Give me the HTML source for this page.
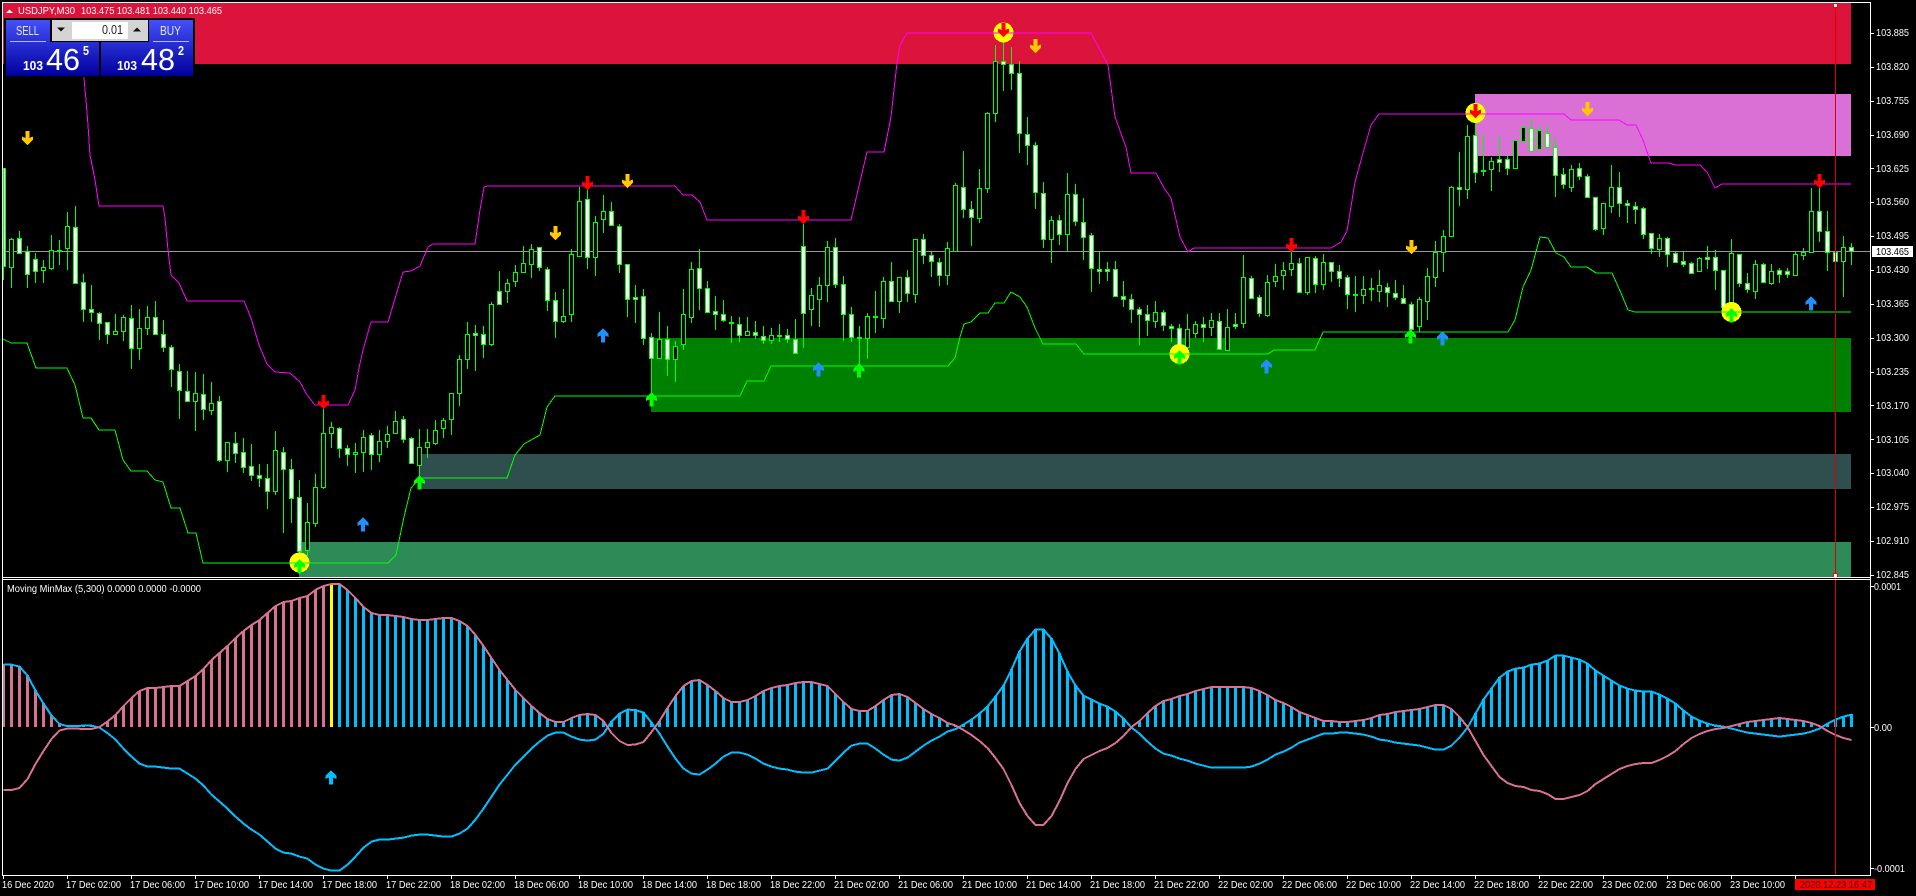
<!DOCTYPE html>
<html><head><meta charset="utf-8"><title>USDJPY,M30</title>
<style>
html,body{margin:0;padding:0;background:#000;width:1916px;height:896px;overflow:hidden}
svg{display:block;position:absolute;left:0;top:0}
text{font-family:"Liberation Sans",sans-serif;font-size:10.5px;fill:#fff}
.c{shape-rendering:crispEdges}
</style></head><body>
<svg width="1916" height="896" viewBox="0 0 1916 896" xmlns="http://www.w3.org/2000/svg">
<defs>
<linearGradient id="pg" gradientUnits="userSpaceOnUse" x1="0" y1="20" x2="0" y2="76"><stop offset="0" stop-color="#4450fa"/><stop offset="1" stop-color="#00009c"/></linearGradient>
<path id="dn" d="M-2 0H2V7L5.5 5.5V8.5L0 14.5L-5.5 8.5V5.5L-2 7Z"/>
<path id="up" d="M-2 14.5H2V7.5L5.5 9V6L0 0L-5.5 6V9L-2 7.5Z"/>
</defs>
<rect width="1916" height="896" fill="#000"/>
<g class="c">
<rect x="3" y="3" width="1848" height="61" fill="#DC143C"/>
<rect x="1475" y="94" width="376" height="62" fill="#DA70D6"/>
<rect x="651" y="338" width="1200" height="74" fill="#008000"/>
<rect x="419" y="454" width="1432" height="35" fill="#2F4F4F"/>
<rect x="299" y="542" width="1552" height="35" fill="#2E8B57"/>
<rect x="3" y="251" width="1867" height="1" fill="#999"/>
<path fill="none" stroke="#00ff00" d="M3.5 168V280M11.5 238V288M19.5 231V254M27.5 246V288M35.5 253V283M43.5 260V283M51.5 235V270M59.5 240V265M67.5 212V270M75.5 206V284M83.5 274V322M91.5 285V322M99.5 312V340M107.5 322V344M115.5 314V335M123.5 315V341M131.5 305V369M139.5 309V360M147.5 306V335M155.5 301V335M163.5 320V352M171.5 345V387M179.5 364V419M187.5 371V402M195.5 372V431M203.5 374V420M211.5 382V415M219.5 396V462M227.5 442V472M235.5 432V463M243.5 438V473M251.5 444V481M259.5 464V487M267.5 464V509M275.5 431V495M283.5 447V533M291.5 459V523M299.5 480V560M307.5 503V556M315.5 474V527M323.5 408V489M331.5 422V448M339.5 427V458M347.5 445V466M355.5 443V473M363.5 430V472M371.5 433V470M379.5 430V462M387.5 426V448M395.5 411V434M403.5 416V443M411.5 437V463M419.5 429V477M427.5 429V458M435.5 420V445M443.5 418V438M451.5 393V435M459.5 355V406M467.5 322V369M475.5 325V371M483.5 326V358M491.5 302V346M499.5 271V305M507.5 279V303M515.5 265V287M523.5 246V273M531.5 244V278M539.5 247V271M547.5 267V311M555.5 292V338M563.5 289V323M571.5 249V322M579.5 187V256M587.5 190V269M595.5 216V276M603.5 195V233M611.5 202V226M619.5 224V273M627.5 264V317M635.5 285V323M643.5 289V345M651.5 333V395M659.5 312V359M667.5 326V376M675.5 341V382M683.5 289V350M691.5 262V323M699.5 249V310M707.5 281V313M715.5 296V330M723.5 300V322M731.5 316V343M739.5 317V342M747.5 317V336M755.5 321V339M763.5 326V344M771.5 328V344M779.5 324V342M787.5 329V343M795.5 319V354M803.5 223V348M811.5 288V326M819.5 277V327M827.5 241V302M835.5 238V288M843.5 276V341M851.5 307V342M859.5 326V370M867.5 313V359M875.5 291V333M883.5 277V328M891.5 262V302M899.5 277V313M907.5 270V302M915.5 239V303M923.5 234V264M931.5 251V277M939.5 258V286M947.5 242V285M955.5 183V251M963.5 151V218M971.5 201V246M979.5 169V223M987.5 112V193M995.5 45V122M1003.5 42V91M1011.5 47V90M1019.5 61V153M1027.5 117V165M1035.5 142V209M1043.5 182V248M1051.5 216V263M1059.5 215V245M1067.5 173V252M1075.5 184V226M1083.5 198V260M1091.5 233V292M1099.5 252V284M1107.5 262V281M1115.5 261V297M1123.5 281V307M1131.5 294V323M1139.5 307V345M1147.5 305V336M1155.5 301V328M1163.5 310V331M1171.5 324V342M1179.5 324V347M1187.5 314V355M1195.5 321V338M1203.5 317V342M1211.5 313V336M1219.5 313V350M1227.5 309V351M1235.5 313V329M1243.5 255V328M1251.5 276V299M1259.5 295V317M1267.5 275V317M1275.5 264V287M1283.5 262V290M1291.5 252V276M1299.5 258V293M1307.5 257V295M1315.5 256V293M1323.5 254V290M1331.5 262V282M1339.5 265V287M1347.5 275V309M1355.5 276V312M1363.5 276V304M1371.5 278V301M1379.5 270V302M1387.5 283V307M1395.5 280V300M1403.5 285V304M1411.5 302V335M1419.5 297V332M1427.5 268V320M1435.5 241V287M1443.5 230V272M1451.5 186V237M1459.5 152V206M1467.5 125V199M1475.5 123V183M1483.5 134V176M1491.5 157V191M1499.5 136V172M1507.5 155V175M1515.5 140V169M1523.5 126V142M1531.5 120V152M1539.5 126V150M1547.5 126V148M1555.5 138V197M1563.5 168V189M1571.5 165V192M1579.5 163V180M1587.5 174V198M1595.5 197V231M1603.5 203V235M1611.5 165V213M1619.5 172V217M1627.5 200V223M1635.5 202V224M1643.5 207V239M1651.5 233V254M1659.5 234V257M1667.5 237V267M1675.5 252V263M1683.5 252V267M1691.5 262V274M1699.5 257V272M1707.5 246V269M1715.5 250V290M1723.5 270V309M1731.5 239V305M1739.5 254V287M1747.5 273V293M1755.5 260V299M1763.5 263V283M1771.5 264V285M1779.5 268V283M1787.5 268V278M1795.5 252V275M1803.5 248V260M1811.5 188V252M1819.5 187V242M1827.5 211V271M1835.5 250V262M1843.5 236V297M1851.5 243V265"/>
<path fill="#fff" stroke="#00ff00" d="M3.5 168.5h2V266.5h-2zM17.5 238.500h4V253.500h-4zM25.500 251.500h4V274.500h-4zM33.500 259.500h4V271.500h-4zM57.500 250.500h4V251.500h-4zM73.500 227.500h4V283.500h-4zM81.500 282.500h4V309.500h-4zM89.500 309.500h4V312.500h-4zM97.500 313.500h4V323.500h-4zM105.500 322.500h4V334.500h-4zM129.500 318.500h4V348.500h-4zM153.500 317.500h4V334.500h-4zM161.500 334.500h4V347.500h-4zM169.500 347.500h4V369.500h-4zM177.500 371.500h4V390.500h-4zM185.500 391.500h4V401.500h-4zM201.500 394.500h4V409.500h-4zM217.500 401.500h4V460.500h-4zM233.500 443.500h4V453.500h-4zM241.500 452.500h4V467.500h-4zM249.500 466.500h4V475.500h-4zM257.500 475.500h4V478.500h-4zM265.500 478.500h4V491.500h-4zM281.500 452.500h4V469.500h-4zM289.500 469.500h4V498.500h-4zM297.500 497.500h4V551.500h-4zM337.500 428.500h4V448.500h-4zM345.500 448.500h4V454.500h-4zM369.500 435.500h4V454.500h-4zM401.500 419.500h4V439.500h-4zM409.500 438.500h4V463.500h-4zM473.500 333.500h4V335.500h-4zM481.500 334.500h4V344.500h-4zM497.500 291.500h4V304.500h-4zM537.500 247.500h4V267.500h-4zM545.500 269.500h4V300.500h-4zM553.500 300.500h4V321.500h-4zM585.500 199.500h4V257.500h-4zM609.500 211.500h4V225.500h-4zM617.500 226.500h4V264.500h-4zM625.500 264.500h4V299.500h-4zM633.500 297.500h4V299.500h-4zM641.500 296.500h4V338.500h-4zM649.500 337.500h4V358.500h-4zM665.500 339.500h4V359.500h-4zM697.500 268.500h4V288.500h-4zM705.500 288.500h4V312.500h-4zM713.500 311.500h4V314.500h-4zM721.500 314.500h4V320.500h-4zM729.500 322.500h4V323.500h-4zM737.500 324.500h4V335.500h-4zM753.500 332.500h4V335.500h-4zM761.500 336.500h4V340.500h-4zM777.500 335.500h4V336.500h-4zM785.500 335.500h4V339.500h-4zM793.500 339.500h4V353.500h-4zM801.500 246.500h4V313.500h-4zM833.500 247.500h4V284.500h-4zM841.500 284.500h4V314.500h-4zM849.500 314.500h4V337.500h-4zM857.500 337.500h4V338.500h-4zM873.500 316.500h4V317.500h-4zM889.500 281.500h4V301.500h-4zM905.500 277.500h4V293.500h-4zM921.500 239.500h4V255.500h-4zM929.500 255.500h4V261.500h-4zM937.500 262.500h4V275.500h-4zM961.500 187.500h4V209.500h-4zM969.500 209.500h4V217.500h-4zM1001.500 61.500h4V64.500h-4zM1009.500 64.500h4V73.500h-4zM1017.500 73.500h4V133.500h-4zM1025.500 134.500h4V145.500h-4zM1033.500 145.500h4V192.500h-4zM1041.500 193.500h4V239.500h-4zM1057.500 220.500h4V234.500h-4zM1073.500 194.500h4V221.500h-4zM1081.500 222.500h4V237.500h-4zM1089.500 235.500h4V268.500h-4zM1097.500 269.500h4V271.500h-4zM1105.500 269.500h4V271.500h-4zM1113.500 269.500h4V296.500h-4zM1121.500 296.500h4V299.500h-4zM1129.500 299.500h4V309.500h-4zM1137.500 309.500h4V314.500h-4zM1145.500 314.500h4V320.500h-4zM1161.500 312.500h4V325.500h-4zM1169.500 326.500h4V328.500h-4zM1177.500 328.500h4V344.500h-4zM1201.500 324.500h4V327.500h-4zM1217.500 321.500h4V349.500h-4zM1233.500 324.500h4V326.500h-4zM1249.500 278.500h4V298.500h-4zM1257.500 297.500h4V313.500h-4zM1297.500 263.500h4V292.500h-4zM1313.500 258.500h4V284.500h-4zM1329.500 262.500h4V271.500h-4zM1337.500 271.500h4V278.500h-4zM1345.500 277.500h4V294.500h-4zM1353.500 294.500h4V295.500h-4zM1369.500 288.500h4V289.500h-4zM1385.500 287.500h4V292.500h-4zM1393.500 293.500h4V297.500h-4zM1401.500 298.500h4V303.500h-4zM1409.500 304.500h4V329.500h-4zM1457.500 187.500h4V189.500h-4zM1473.500 135.500h4V172.500h-4zM1481.500 170.500h4V171.500h-4zM1497.500 159.500h4V162.500h-4zM1505.500 159.500h4V168.500h-4zM1529.500 128.500h4V151.500h-4zM1545.500 133.500h4V147.500h-4zM1553.500 147.500h4V175.500h-4zM1561.500 174.500h4V184.500h-4zM1577.500 168.500h4V176.500h-4zM1585.500 176.500h4V197.500h-4zM1593.500 197.500h4V229.500h-4zM1617.500 187.500h4V203.500h-4zM1625.500 203.500h4V205.500h-4zM1633.500 206.500h4V209.500h-4zM1641.500 208.500h4V234.500h-4zM1649.500 233.500h4V248.500h-4zM1665.500 238.500h4V254.500h-4zM1673.500 253.500h4V262.500h-4zM1681.500 261.500h4V264.500h-4zM1689.500 263.500h4V273.500h-4zM1705.500 257.500h4V259.500h-4zM1713.500 257.500h4V270.500h-4zM1721.500 270.500h4V307.500h-4zM1737.500 254.500h4V283.500h-4zM1745.500 283.500h4V289.500h-4zM1761.500 264.500h4V282.500h-4zM1777.500 270.500h4V274.500h-4zM1785.500 271.500h4V274.500h-4zM1817.500 211.500h4V231.500h-4zM1825.500 231.500h4V252.500h-4zM1833.500 252.500h4V261.500h-4zM1849.500 247.500h4V251.500h-4z"/>
<path fill="#000" stroke="#00ff00" d="M9.500 239.500h4V267.500h-4zM41.500 267.500h4V270.500h-4zM49.500 250.500h4V268.500h-4zM65.500 226.500h4V248.500h-4zM113.500 331.500h4V334.500h-4zM121.500 317.500h4V331.500h-4zM137.500 328.500h4V348.500h-4zM145.500 317.500h4V328.500h-4zM193.500 393.500h4V401.500h-4zM209.500 403.500h4V410.500h-4zM225.500 442.500h4V460.500h-4zM273.500 450.500h4V491.500h-4zM305.500 522.500h4V550.500h-4zM313.500 487.500h4V523.500h-4zM321.500 433.500h4V487.500h-4zM329.500 427.500h4V433.500h-4zM353.500 452.500h4V454.500h-4zM361.500 437.500h4V452.500h-4zM377.500 441.500h4V454.500h-4zM385.500 434.500h4V441.500h-4zM393.500 421.500h4V433.500h-4zM417.500 447.500h4V465.500h-4zM425.500 442.500h4V447.500h-4zM433.500 430.500h4V443.500h-4zM441.500 420.500h4V428.500h-4zM449.500 393.500h4V419.500h-4zM457.500 359.500h4V393.500h-4zM465.500 334.500h4V359.500h-4zM489.500 304.500h4V344.500h-4zM505.500 283.500h4V291.500h-4zM513.500 272.500h4V281.500h-4zM521.500 263.500h4V272.500h-4zM529.500 249.500h4V264.500h-4zM561.500 316.500h4V321.500h-4zM569.500 254.500h4V314.500h-4zM577.500 201.500h4V256.500h-4zM593.500 222.500h4V257.500h-4zM601.500 211.500h4V219.500h-4zM657.500 339.500h4V358.500h-4zM673.500 346.500h4V359.500h-4zM681.500 314.500h4V344.500h-4zM689.500 269.500h4V317.500h-4zM745.500 331.500h4V335.500h-4zM769.500 335.500h4V340.500h-4zM809.500 295.500h4V309.500h-4zM817.500 285.500h4V299.500h-4zM825.500 247.500h4V285.500h-4zM865.500 316.500h4V338.500h-4zM881.500 281.500h4V318.500h-4zM897.500 277.500h4V301.500h-4zM913.500 239.500h4V294.500h-4zM945.500 248.500h4V275.500h-4zM953.500 185.500h4V251.500h-4zM977.500 188.500h4V218.500h-4zM985.500 113.500h4V188.500h-4zM993.500 61.500h4V113.500h-4zM1049.500 220.500h4V239.500h-4zM1065.500 194.500h4V234.500h-4zM1153.500 312.500h4V321.500h-4zM1185.500 329.500h4V347.500h-4zM1193.500 324.500h4V333.500h-4zM1209.500 320.500h4V327.500h-4zM1225.500 327.500h4V350.500h-4zM1241.500 277.500h4V323.500h-4zM1265.500 282.500h4V315.500h-4zM1273.500 276.500h4V281.500h-4zM1281.500 270.500h4V275.500h-4zM1289.500 263.500h4V269.500h-4zM1305.500 257.500h4V292.500h-4zM1321.500 262.500h4V284.500h-4zM1361.500 289.500h4V295.500h-4zM1377.500 285.500h4V291.500h-4zM1417.500 299.500h4V326.500h-4zM1425.500 276.500h4V301.500h-4zM1433.500 252.500h4V277.500h-4zM1441.500 236.500h4V252.500h-4zM1449.500 187.500h4V236.500h-4zM1465.500 136.500h4V189.500h-4zM1489.500 161.500h4V169.500h-4zM1513.500 140.500h4V168.500h-4zM1521.500 127.500h4V141.500h-4zM1537.500 130.500h4V149.500h-4zM1569.500 169.500h4V187.500h-4zM1601.500 203.500h4V228.500h-4zM1609.500 187.500h4V206.500h-4zM1657.500 238.500h4V249.500h-4zM1697.500 258.500h4V271.500h-4zM1729.500 253.500h4V303.500h-4zM1753.500 264.500h4V291.500h-4zM1769.500 271.500h4V283.500h-4zM1793.500 254.500h4V275.500h-4zM1801.500 252.500h4V255.500h-4zM1809.500 211.500h4V252.500h-4zM1841.500 247.500h4V261.500h-4z"/>
<circle cx="299.5" cy="562.5" r="10" fill="#ffff00"/>
<circle cx="1003.5" cy="32.5" r="10" fill="#ffff00"/>
<circle cx="1179.5" cy="354" r="10" fill="#ffff00"/>
<circle cx="1475.5" cy="113" r="10" fill="#ffff00"/>
<circle cx="1731.5" cy="312" r="10" fill="#ffff00"/>
<polyline fill="none" stroke="#ff00ff" stroke-width="1" points="83,70 84,78 86,100 88,125 90,155 91,160 95,180 99,206 163,206 165,218 168,250 171,275 179,283 187,301 244,301 251,318 259,345 267,364 275,372 290,373 300,382 307,395 315,405 348,405 355,390 359,368 363,350 371,322 388,322 394,302 403,272 411,271 420,266 428,247 433,244 475,244 480,210 484,187 488,186 675,186 683,195 692,195 700,202 707,220 851,220 867,152 884,152 891,117 897,63 900,45 907,33 1091,33 1101,52 1108,65 1115,117 1126,147 1131,173 1156,173 1164,188 1171,198 1180,237 1188,252 1194,248 1331,248 1341,242 1347,231 1355,182 1363,153 1371,125 1379,114 1564,114 1571,120 1619,120 1627,125 1636,125 1643,140 1651,163 1669,163 1675,165 1700,165 1707,172 1715,188 1722,184 1851,184"/>
<polyline fill="none" stroke="#00ff00" stroke-width="1" points="3,339 11,343 27,343 36,368 67,368 75,385 83,418 91,418 99,430 115,430 123,460 131,471 147,471 155,480 163,482 171,508 180,508 188,533 196,533 203,563 388,563 396,555 404,517 411,488 420,478 507,478 515,455 524,444 540,435 547,407 555,396 740,396 747,381 764,381 771,366 948,366 955,358 960,337 964,324 971,322 980,313 988,313 995,303 1004,303 1011,292 1020,297 1027,307 1035,328 1043,344 1076,344 1084,354 1268,354 1274,350 1315,350 1323,332 1508,332 1515,320 1523,287 1531,270 1540,237 1548,238 1556,253 1564,257 1571,267 1587,267 1596,273 1612,273 1621,293 1628,310 1635,312 1851,312"/>
<use href="#dn" transform="translate(27.5,131)" fill="#ffc800"/>
<use href="#dn" transform="translate(555.5,226)" fill="#ffc800"/>
<use href="#dn" transform="translate(627.5,174)" fill="#ffc800"/>
<use href="#dn" transform="translate(1035.5,39)" fill="#ffc800"/>
<use href="#dn" transform="translate(1411.5,240)" fill="#ffc800"/>
<use href="#dn" transform="translate(1587.5,102)" fill="#ffc800"/>
<use href="#dn" transform="translate(323.5,395)" fill="#ff0000"/>
<use href="#dn" transform="translate(587.5,176)" fill="#ff0000"/>
<use href="#dn" transform="translate(803.5,210)" fill="#ff0000"/>
<use href="#dn" transform="translate(1003.5,23)" fill="#ff0000"/>
<use href="#dn" transform="translate(1291.5,238)" fill="#ff0000"/>
<use href="#dn" transform="translate(1475.5,104)" fill="#ff0000"/>
<use href="#dn" transform="translate(1819.5,174)" fill="#ff0000"/>
<use href="#up" transform="translate(299.5,559)" fill="#00ff00"/>
<use href="#up" transform="translate(419.5,475)" fill="#00ff00"/>
<use href="#up" transform="translate(651.5,392)" fill="#00ff00"/>
<use href="#up" transform="translate(859,363)" fill="#00ff00"/>
<use href="#up" transform="translate(1179.5,350)" fill="#00ff00"/>
<use href="#up" transform="translate(1410.5,329)" fill="#00ff00"/>
<use href="#up" transform="translate(1731.5,308)" fill="#00ff00"/>
<use href="#up" transform="translate(363,517)" fill="#1E90FF"/>
<use href="#up" transform="translate(603,328)" fill="#1E90FF"/>
<use href="#up" transform="translate(818.5,362)" fill="#1E90FF"/>
<use href="#up" transform="translate(1266.5,359)" fill="#1E90FF"/>
<use href="#up" transform="translate(1442.5,331)" fill="#1E90FF"/>
<use href="#up" transform="translate(1811,296)" fill="#1E90FF"/>
<use href="#up" transform="translate(331,770)" fill="#00BFFF"/>
<path fill="none" stroke="#DB7093" stroke-width="3" d="M3.5 727V664M11.5 727V664M19.5 727V666M27.5 727V675M35.5 727V690M43.5 727V703M51.5 727V715M59.5 727V723M67.5 727V725M75.5 727V725M83.5 727V725M91.5 727V725M107.5 727V721M115.5 727V715M123.5 727V706M131.5 727V698M139.5 727V691M147.5 727V688M155.5 727V688M163.5 727V687M171.5 727V686M179.5 727V686M187.5 727V681M195.5 727V676M203.5 727V669M211.5 727V660M219.5 727V653M227.5 727V646M235.5 727V638M243.5 727V631M251.5 727V625M259.5 727V620M267.5 727V613M275.5 727V606M283.5 727V602M291.5 727V601M299.5 727V598M307.5 727V596M315.5 727V590M323.5 727V586"/>
<path fill="none" stroke="#ffff00" stroke-width="3" d="M331.5 727V584"/>
<path fill="none" stroke="#00BFFF" stroke-width="3" d="M339.5 727V584M347.5 727V590M355.5 727V598M363.5 727V607M371.5 727V613M379.5 727V615M387.5 727V615M395.5 727V616M403.5 727V617M411.5 727V619M419.5 727V620M427.5 727V620M435.5 727V619M443.5 727V618M451.5 727V618M459.5 727V621M467.5 727V626M475.5 727V635M483.5 727V646M491.5 727V658M499.5 727V670M507.5 727V680M515.5 727V690M523.5 727V698M531.5 727V706M539.5 727V713M547.5 727V719M555.5 727V722M563.5 727V722M571.5 727V718M579.5 727V715M587.5 727V714M595.5 727V715M603.5 727V721M611.5 727V721M619.5 727V713M627.5 727V709M635.5 727V709M643.5 727V712M651.5 727V722M659.5 727V721M667.5 727V708M675.5 727V696M683.5 727V686M691.5 727V681M699.5 727V680M707.5 727V685M715.5 727V691M723.5 727V698M731.5 727V702M739.5 727V702M747.5 727V700M755.5 727V696M763.5 727V691M771.5 727V688M779.5 727V686M787.5 727V685M795.5 727V683M803.5 727V682M811.5 727V682M819.5 727V684M827.5 727V686M835.5 727V694M843.5 727V702M851.5 727V709M859.5 727V711M867.5 727V711M875.5 727V706M883.5 727V700M891.5 727V695M899.5 727V694M907.5 727V697M915.5 727V703M923.5 727V709M931.5 727V714M939.5 727V718M947.5 727V723M955.5 727V725M963.5 727V724M971.5 727V719M979.5 727V713M987.5 727V706M995.5 727V696M1003.5 727V685M1011.5 727V669M1019.5 727V651M1027.5 727V638M1035.5 727V629M1043.5 727V629M1051.5 727V638M1059.5 727V653M1067.5 727V671M1075.5 727V685M1083.5 727V695M1091.5 727V699M1099.5 727V703M1107.5 727V706M1115.5 727V711M1123.5 727V718M1139.5 727V721M1147.5 727V713M1155.5 727V706M1163.5 727V701M1171.5 727V699M1179.5 727V696M1187.5 727V694M1195.5 727V691M1203.5 727V689M1211.5 727V687M1219.5 727V687M1227.5 727V687M1235.5 727V687M1243.5 727V687M1251.5 727V688M1259.5 727V691M1267.5 727V695M1275.5 727V700M1283.5 727V703M1291.5 727V707M1299.5 727V712M1307.5 727V715M1315.5 727V718M1323.5 727V721M1331.5 727V721M1339.5 727V722M1347.5 727V722M1355.5 727V721M1363.5 727V720M1371.5 727V718M1379.5 727V715M1387.5 727V714M1395.5 727V712M1403.5 727V711M1411.5 727V710M1419.5 727V709M1427.5 727V707M1435.5 727V705M1443.5 727V705M1451.5 727V709M1459.5 727V717M1475.5 727V713M1483.5 727V699M1491.5 727V688M1499.5 727V677M1507.5 727V671M1515.5 727V668M1523.5 727V667M1531.5 727V664M1539.5 727V663M1547.5 727V660M1555.5 727V655M1563.5 727V655M1571.5 727V657M1579.5 727V659M1587.5 727V663M1595.5 727V670M1603.5 727V675M1611.5 727V680M1619.5 727V685M1627.5 727V688M1635.5 727V690M1643.5 727V691M1651.5 727V691M1659.5 727V694M1667.5 727V698M1675.5 727V703M1683.5 727V710M1691.5 727V716M1699.5 727V720M1707.5 727V723M1715.5 727V725M1723.5 727V726M1731.5 727V726M1739.5 727V724M1747.5 727V722M1755.5 727V721M1763.5 727V720M1771.5 727V719M1779.5 727V718M1787.5 727V719M1795.5 727V720M1803.5 727V721M1811.5 727V723M1819.5 727V726M1827.5 727V723M1835.5 727V719M1843.5 727V716M1851.5 727V714"/>
<polyline id="pl" fill="none" stroke="#00BFFF" stroke-width="2" transform="matrix(1 0 0 -1 0 1454.6)" points="3.5,790 11.5,790 19.5,788 27.5,779 35.5,764 43.5,751 51.5,739 59.5,730.5 67.5,728.5 75.5,728.5 83.5,729 91.5,729 99.5,727 107.5,721.5 115.5,715 123.5,706 131.5,698 139.5,691 147.5,688 155.5,688 163.5,687 171.5,686 179.5,686 187.5,681 195.5,676 203.5,669 211.5,660 219.5,653 227.5,646 235.5,638 243.5,631 251.5,625 259.5,620 267.5,613 275.5,606 283.5,602 291.5,601 299.5,598 307.5,596 315.5,590 323.5,586 331.5,584 339.5,584 347.5,590 355.5,598 363.5,607 371.5,613 379.5,615 387.5,615 395.5,616 403.5,617 411.5,619 419.5,620 427.5,620 435.5,619 443.5,618 451.5,618 459.5,621 467.5,626 475.5,635 483.5,646 491.5,658 499.5,670 507.5,680 515.5,690 523.5,698 531.5,706 539.5,713 547.5,719 555.5,722 563.5,722 571.5,718 579.5,715 587.5,714 595.5,715 603.5,721 611.5,733 619.5,741 627.5,745 635.5,744.5 643.5,742 651.5,732 659.5,721 667.5,708 675.5,696 683.5,686 691.5,681 699.5,680 707.5,685 715.5,691 723.5,698 731.5,702 739.5,702 747.5,700 755.5,696 763.5,691 771.5,688 779.5,686 787.5,685 795.5,683 803.5,682 811.5,682 819.5,684 827.5,686 835.5,694 843.5,702 851.5,709 859.5,711 867.5,711 875.5,706 883.5,700 891.5,695 899.5,694 907.5,697 915.5,703 923.5,709 931.5,714 939.5,718 947.5,723 955.5,725.5 963.5,730 971.5,735 979.5,741 987.5,748 995.5,758 1003.5,769 1011.5,785 1019.5,803 1027.5,816 1035.5,825 1043.5,825 1051.5,816 1059.5,801 1067.5,783 1075.5,769 1083.5,759 1091.5,755 1099.5,751 1107.5,748 1115.5,743 1123.5,736 1131.5,727 1139.5,721 1147.5,713 1155.5,706 1163.5,701 1171.5,699 1179.5,696 1187.5,694 1195.5,691 1203.5,689 1211.5,687 1219.5,687 1227.5,687 1235.5,687 1243.5,687 1251.5,688 1259.5,691 1267.5,695 1275.5,700 1283.5,703 1291.5,707 1299.5,712 1307.5,715 1315.5,718 1323.5,721 1331.5,721 1339.5,722 1347.5,722 1355.5,721 1363.5,720 1371.5,718 1379.5,715 1387.5,714 1395.5,712 1403.5,711 1411.5,710 1419.5,709 1427.5,707 1435.5,705 1443.5,705 1451.5,709 1459.5,717 1467.5,727 1475.5,741 1483.5,755 1491.5,766 1499.5,777 1507.5,783 1515.5,786 1523.5,787 1531.5,790 1539.5,791 1547.5,794 1555.5,799 1563.5,799 1571.5,797 1579.5,795 1587.5,791 1595.5,784 1603.5,779 1611.5,774 1619.5,769 1627.5,766 1635.5,764 1643.5,763 1651.5,763 1659.5,760 1667.5,756 1675.5,751 1683.5,744 1691.5,738 1699.5,734 1707.5,731 1715.5,729 1723.5,728 1731.5,726 1739.5,724 1747.5,722 1755.5,721 1763.5,720 1771.5,719 1779.5,718 1787.5,719 1795.5,720 1803.5,721 1811.5,723 1819.5,726 1827.5,731 1835.5,735 1843.5,738 1851.5,740"/>
<polyline fill="none" stroke="#DB7093" stroke-width="2" points="3.5,790 11.5,790 19.5,788 27.5,779 35.5,764 43.5,751 51.5,739 59.5,730.5 67.5,728.5 75.5,728.5 83.5,729 91.5,729 99.5,727 107.5,721.5 115.5,715 123.5,706 131.5,698 139.5,691 147.5,688 155.5,688 163.5,687 171.5,686 179.5,686 187.5,681 195.5,676 203.5,669 211.5,660 219.5,653 227.5,646 235.5,638 243.5,631 251.5,625 259.5,620 267.5,613 275.5,606 283.5,602 291.5,601 299.5,598 307.5,596 315.5,590 323.5,586 331.5,584 339.5,584 347.5,590 355.5,598 363.5,607 371.5,613 379.5,615 387.5,615 395.5,616 403.5,617 411.5,619 419.5,620 427.5,620 435.5,619 443.5,618 451.5,618 459.5,621 467.5,626 475.5,635 483.5,646 491.5,658 499.5,670 507.5,680 515.5,690 523.5,698 531.5,706 539.5,713 547.5,719 555.5,722 563.5,722 571.5,718 579.5,715 587.5,714 595.5,715 603.5,721 611.5,733 619.5,741 627.5,745 635.5,744.5 643.5,742 651.5,732 659.5,721 667.5,708 675.5,696 683.5,686 691.5,681 699.5,680 707.5,685 715.5,691 723.5,698 731.5,702 739.5,702 747.5,700 755.5,696 763.5,691 771.5,688 779.5,686 787.5,685 795.5,683 803.5,682 811.5,682 819.5,684 827.5,686 835.5,694 843.5,702 851.5,709 859.5,711 867.5,711 875.5,706 883.5,700 891.5,695 899.5,694 907.5,697 915.5,703 923.5,709 931.5,714 939.5,718 947.5,723 955.5,725.5 963.5,730 971.5,735 979.5,741 987.5,748 995.5,758 1003.5,769 1011.5,785 1019.5,803 1027.5,816 1035.5,825 1043.5,825 1051.5,816 1059.5,801 1067.5,783 1075.5,769 1083.5,759 1091.5,755 1099.5,751 1107.5,748 1115.5,743 1123.5,736 1131.5,727 1139.5,721 1147.5,713 1155.5,706 1163.5,701 1171.5,699 1179.5,696 1187.5,694 1195.5,691 1203.5,689 1211.5,687 1219.5,687 1227.5,687 1235.5,687 1243.5,687 1251.5,688 1259.5,691 1267.5,695 1275.5,700 1283.5,703 1291.5,707 1299.5,712 1307.5,715 1315.5,718 1323.5,721 1331.5,721 1339.5,722 1347.5,722 1355.5,721 1363.5,720 1371.5,718 1379.5,715 1387.5,714 1395.5,712 1403.5,711 1411.5,710 1419.5,709 1427.5,707 1435.5,705 1443.5,705 1451.5,709 1459.5,717 1467.5,727 1475.5,741 1483.5,755 1491.5,766 1499.5,777 1507.5,783 1515.5,786 1523.5,787 1531.5,790 1539.5,791 1547.5,794 1555.5,799 1563.5,799 1571.5,797 1579.5,795 1587.5,791 1595.5,784 1603.5,779 1611.5,774 1619.5,769 1627.5,766 1635.5,764 1643.5,763 1651.5,763 1659.5,760 1667.5,756 1675.5,751 1683.5,744 1691.5,738 1699.5,734 1707.5,731 1715.5,729 1723.5,728 1731.5,726 1739.5,724 1747.5,722 1755.5,721 1763.5,720 1771.5,719 1779.5,718 1787.5,719 1795.5,720 1803.5,721 1811.5,723 1819.5,726 1827.5,731 1835.5,735 1843.5,738 1851.5,740"/>
<rect x="1835" y="3" width="1" height="872" fill="#dc0000"/>
<rect x="1833.500" y="3.500" width="4" height="4" fill="#fff" stroke="#f00"/>
<rect x="1833.500" y="573.500" width="4" height="4" fill="#fff" stroke="#f00"/>
<path fill="none" stroke="#fff" d="M2.500 2.500H1870.500V875.500H2.500ZM2.500 577.500H1870.500M2.500 579.500H1870.500"/>
<path fill="none" stroke="#fff" d="M1871 33.500h3M1871 67.500h3M1871 101.500h3M1871 135.500h3M1871 168.500h3M1871 202.500h3M1871 236.500h3M1871 270.500h3M1871 304.500h3M1871 338.500h3M1871 372.500h3M1871 405.500h3M1871 439.500h3M1871 473.500h3M1871 507.500h3M1871 541.500h3M1871 575.500h3M1871 586.500h3M1871 727.500h3M1871 868.500h3"/>
<path fill="none" stroke="#fff" d="M3.500 875V879M67.500 875V879M131.500 875V879M195.500 875V879M259.500 875V879M323.500 875V879M387.500 875V879M451.500 875V879M515.500 875V879M579.500 875V879M643.500 875V879M707.500 875V879M771.500 875V879M835.500 875V879M899.500 875V879M963.500 875V879M1027.500 875V879M1091.500 875V879M1155.500 875V879M1219.500 875V879M1283.500 875V879M1347.500 875V879M1411.500 875V879M1475.500 875V879M1539.500 875V879M1603.500 875V879M1667.500 875V879M1731.500 875V879M1795.500 875V879"/>
<rect x="1872" y="246" width="41" height="11" fill="#fff"/>
<rect x="1795" y="879" width="80" height="11" fill="#ff0000"/>
</g>

<!-- title -->
<polygon points="6,13 13,13 9.500,9.500" fill="#fff"/>
<text x="18" y="14" textLength="57" lengthAdjust="spacingAndGlyphs">USDJPY,M30</text>
<text x="81" y="14" textLength="141" lengthAdjust="spacingAndGlyphs">103.475 103.481 103.440 103.465</text>

<!-- trade panel -->
<g class="c">
<rect x="4" y="18" width="191" height="59" fill="#000"/>
<path fill="url(#pg)" d="M6 20H50V42H99V76H6Z"/>
<path fill="url(#pg)" d="M149 20H193V76H101V42H149Z"/>
<rect x="52" y="20" width="96" height="21" fill="#d4d4d4"/>
<rect x="72" y="22" width="56" height="17" fill="#fff"/>
<rect x="10" y="41" width="36" height="1" fill="#b8bce8"/>
<rect x="153" y="41" width="36" height="1" fill="#b8bce8"/>
</g>
<polygon points="57,27.500 65,27.500 61,31.500" fill="#111"/>
<polygon points="133,31.500 141,31.500 137,27.500" fill="#111"/>
<text x="16" y="35" textLength="23" lengthAdjust="spacingAndGlyphs" style="font-size:12.500px;fill:#e4e8ff">SELL</text>
<text x="160" y="35" textLength="21" lengthAdjust="spacingAndGlyphs" style="font-size:12.500px;fill:#e4e8ff">BUY</text>
<text x="102" y="34" textLength="21" lengthAdjust="spacingAndGlyphs" style="font-size:12.500px;fill:#222">0.01</text>
<text x="23" y="70" textLength="20" lengthAdjust="spacingAndGlyphs" style="font-size:13px;font-weight:bold">103</text>
<text x="46" y="70" textLength="34" lengthAdjust="spacingAndGlyphs" style="font-size:31px">46</text>
<text x="83" y="55" textLength="6" lengthAdjust="spacingAndGlyphs" style="font-size:13px;font-weight:bold">5</text>
<text x="117" y="70" textLength="20" lengthAdjust="spacingAndGlyphs" style="font-size:13px;font-weight:bold">103</text>
<text x="141" y="70" textLength="34" lengthAdjust="spacingAndGlyphs" style="font-size:31px">48</text>
<text x="178" y="55" textLength="6" lengthAdjust="spacingAndGlyphs" style="font-size:13px;font-weight:bold">2</text>

<!-- price axis -->
<g>
<text x="1876" y="36" textLength="33" lengthAdjust="spacingAndGlyphs">103.885</text>
<text x="1876" y="70" textLength="33" lengthAdjust="spacingAndGlyphs">103.820</text>
<text x="1876" y="104" textLength="33" lengthAdjust="spacingAndGlyphs">103.755</text>
<text x="1876" y="138" textLength="33" lengthAdjust="spacingAndGlyphs">103.690</text>
<text x="1876" y="172" textLength="33" lengthAdjust="spacingAndGlyphs">103.625</text>
<text x="1876" y="205" textLength="33" lengthAdjust="spacingAndGlyphs">103.560</text>
<text x="1876" y="239" textLength="33" lengthAdjust="spacingAndGlyphs">103.495</text>
<text x="1876" y="255" textLength="33" lengthAdjust="spacingAndGlyphs" style="fill:#000">103.465</text>
<text x="1876" y="273" textLength="33" lengthAdjust="spacingAndGlyphs">103.430</text>
<text x="1876" y="307" textLength="33" lengthAdjust="spacingAndGlyphs">103.365</text>
<text x="1876" y="341" textLength="33" lengthAdjust="spacingAndGlyphs">103.300</text>
<text x="1876" y="375" textLength="33" lengthAdjust="spacingAndGlyphs">103.235</text>
<text x="1876" y="409" textLength="33" lengthAdjust="spacingAndGlyphs">103.170</text>
<text x="1876" y="443" textLength="33" lengthAdjust="spacingAndGlyphs">103.105</text>
<text x="1876" y="476" textLength="33" lengthAdjust="spacingAndGlyphs">103.040</text>
<text x="1876" y="510" textLength="33" lengthAdjust="spacingAndGlyphs">102.975</text>
<text x="1876" y="544" textLength="33" lengthAdjust="spacingAndGlyphs">102.910</text>
<text x="1876" y="578" textLength="33" lengthAdjust="spacingAndGlyphs">102.845</text>
<text x="1874" y="590" textLength="27" lengthAdjust="spacingAndGlyphs">0.0001</text>
<text x="1874" y="731" textLength="18" lengthAdjust="spacingAndGlyphs">0.00</text>
<text x="1874" y="872" textLength="31" lengthAdjust="spacingAndGlyphs">-0.0001</text>
</g>

<text x="7" y="592" textLength="194" lengthAdjust="spacingAndGlyphs">Moving MinMax (5,300) 0.0000 0.0000 -0.0000</text>

<!-- time axis -->
<g>
<text x="2" y="888" textLength="52" lengthAdjust="spacingAndGlyphs">16 Dec 2020</text>
<text x="66" y="888" textLength="55" lengthAdjust="spacingAndGlyphs">17 Dec 02:00</text>
<text x="130" y="888" textLength="55" lengthAdjust="spacingAndGlyphs">17 Dec 06:00</text>
<text x="194" y="888" textLength="55" lengthAdjust="spacingAndGlyphs">17 Dec 10:00</text>
<text x="258" y="888" textLength="55" lengthAdjust="spacingAndGlyphs">17 Dec 14:00</text>
<text x="322" y="888" textLength="55" lengthAdjust="spacingAndGlyphs">17 Dec 18:00</text>
<text x="386" y="888" textLength="55" lengthAdjust="spacingAndGlyphs">17 Dec 22:00</text>
<text x="450" y="888" textLength="55" lengthAdjust="spacingAndGlyphs">18 Dec 02:00</text>
<text x="514" y="888" textLength="55" lengthAdjust="spacingAndGlyphs">18 Dec 06:00</text>
<text x="578" y="888" textLength="55" lengthAdjust="spacingAndGlyphs">18 Dec 10:00</text>
<text x="642" y="888" textLength="55" lengthAdjust="spacingAndGlyphs">18 Dec 14:00</text>
<text x="706" y="888" textLength="55" lengthAdjust="spacingAndGlyphs">18 Dec 18:00</text>
<text x="770" y="888" textLength="55" lengthAdjust="spacingAndGlyphs">18 Dec 22:00</text>
<text x="834" y="888" textLength="55" lengthAdjust="spacingAndGlyphs">21 Dec 02:00</text>
<text x="898" y="888" textLength="55" lengthAdjust="spacingAndGlyphs">21 Dec 06:00</text>
<text x="962" y="888" textLength="55" lengthAdjust="spacingAndGlyphs">21 Dec 10:00</text>
<text x="1026" y="888" textLength="55" lengthAdjust="spacingAndGlyphs">21 Dec 14:00</text>
<text x="1090" y="888" textLength="55" lengthAdjust="spacingAndGlyphs">21 Dec 18:00</text>
<text x="1154" y="888" textLength="55" lengthAdjust="spacingAndGlyphs">21 Dec 22:00</text>
<text x="1218" y="888" textLength="55" lengthAdjust="spacingAndGlyphs">22 Dec 02:00</text>
<text x="1282" y="888" textLength="55" lengthAdjust="spacingAndGlyphs">22 Dec 06:00</text>
<text x="1346" y="888" textLength="55" lengthAdjust="spacingAndGlyphs">22 Dec 10:00</text>
<text x="1410" y="888" textLength="55" lengthAdjust="spacingAndGlyphs">22 Dec 14:00</text>
<text x="1474" y="888" textLength="55" lengthAdjust="spacingAndGlyphs">22 Dec 18:00</text>
<text x="1538" y="888" textLength="55" lengthAdjust="spacingAndGlyphs">22 Dec 22:00</text>
<text x="1602" y="888" textLength="55" lengthAdjust="spacingAndGlyphs">23 Dec 02:00</text>
<text x="1666" y="888" textLength="55" lengthAdjust="spacingAndGlyphs">23 Dec 06:00</text>
<text x="1730" y="888" textLength="55" lengthAdjust="spacingAndGlyphs">23 Dec 10:00</text>
<text x="1800" y="888" textLength="72" lengthAdjust="spacingAndGlyphs" style="fill:#3a0000">2020.12.23 16:47</text>
</g>
</svg>
</body></html>
